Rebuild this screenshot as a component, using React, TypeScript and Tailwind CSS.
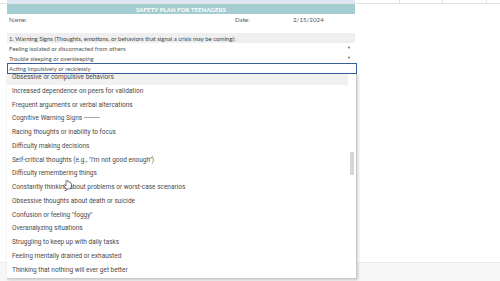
import React from 'react';

const items = [
    'Obsessive or compulsive behaviors',
    'Increased dependence on peers for validation',
    'Frequent arguments or verbal altercations',
    'Cognitive Warning Signs ---------',
    'Racing thoughts or inability to focus',
    'Difficulty making decisions',
    'Self-critical thoughts (e.g., "I\'m not good enough")',
    'Difficulty remembering things',
    'Constantly thinking about problems or worst-case scenarios',
    'Obsessive thoughts about death or suicide',
    'Confusion or feeling "foggy"',
    'Overanalyzing situations',
    'Struggling to keep up with daily tasks',
    'Feeling mentally drained or exhausted',
    'Thinking that nothing will ever get better',
];

const Caret = () => <span className="text-[4px] leading-none text-[#666]">▼</span>;

const App: React.FC = () => {
    return (
        <div className="relative w-[500px] h-[281px] overflow-hidden bg-white flex flex-col text-[#333]" style={{ fontFamily: 'Lato, "Liberation Sans", sans-serif' }}>
            {/* top partial row */}
            <div className="flex h-[4px] shrink-0 border-b border-[#e3e3e3]">
                <div className="w-[7px]" />
                <div className="w-[348px] bg-[#dde6f3]" />
                <div className="w-[45px] border-r border-[#e3e3e3]" />
                <div className="w-[43px] border-r border-[#e3e3e3]" />
                <div className="w-[44px] border-r border-[#e3e3e3]" />
            </div>

            {/* title */}
            <div className="flex h-[10px] shrink-0">
                <div className="w-[7px]" />
                <div className="w-[348px] bg-[#a3cdd0] flex items-center justify-center text-white font-bold text-[6px] tracking-[0.1px]">
                    SAFETY PLAN FOR TEENAGERS
                </div>
            </div>

            {/* name / date */}
            <div className="flex h-[12px] shrink-0 items-center text-[6.2px] text-[#555]">
                <div className="w-[9px]" />
                <div className="w-[226px]">Name:</div>
                <div className="w-[58px]">Date:</div>
                <div>2/15/2024</div>
            </div>

            <div className="h-[7px] shrink-0" />

            {/* section heading */}
            <div className="flex h-[10px] shrink-0">
                <div className="w-[7px]" />
                <div className="w-[348px] bg-[#efefef] flex items-center pl-[2px] text-[6px] text-[#444]">
                    1. Warning Signs (Thoughts, emotions, or behaviors that signal a crisis may be coming):
                </div>
            </div>

            {['Feeling isolated or disconnected from others', 'Trouble sleeping or oversleeping'].map(t => (
                <div key={t} className="flex h-[10px] shrink-0">
                    <div className="w-[7px]" />
                    <div className="w-[348px] flex items-center justify-between pl-[2px] pr-[4px] text-[6px] text-[#555]">
                        <span>{t}</span>
                        <Caret />
                    </div>
                </div>
            ))}

            {/* selected cell */}
            <div className="flex h-[11px] shrink-0">
                <div className="w-[7px]" />
                <div className="w-[350px] border border-[#3a5e9c] flex items-center pl-[1px] text-[6px] text-[#555]">
                    Acting impulsively or recklessly
                </div>
            </div>

            <div className="flex-1" />

            {/* sheet tab bar */}
            <div className="h-[19px] shrink-0 bg-[#f7f7f8] border-t border-[#ececec]" />

            {/* dropdown */}
            <div className="absolute left-[7px] top-[74px] w-[350px] h-[205px] bg-white border-r border-b border-[#c8c8c8] shadow-[1px_1px_3px_rgba(0,0,0,0.2)] overflow-hidden" style={{ fontFamily: 'Roboto, "Liberation Sans", sans-serif' }}>
                <div className="flex flex-col -mt-[3px]">
                    {items.map((t, i) => (
                        <div key={t} className={`h-[13.75px] shrink-0 flex items-center pl-[5px] text-[6.5px] text-[#4a4a4a] ${i === 0 ? 'bg-[#f1f1f1] mr-[8px]' : ''}`}>
                            {t}
                        </div>
                    ))}
                </div>
                {/* scrollbar thumb */}
                <div className="absolute left-[343px] top-[78px] w-[4px] h-[23px] bg-[#d6d6d6]" />
            </div>

            {/* cursor */}
            <svg className="absolute left-[63px] top-[180px]" width="9" height="11" viewBox="0 0 9 11">
                <path d="M3 1 v5 l-1 -1 q-1 -0.5 -1.5 0.3 l2.5 3.7 h4.5 l1 -3 v-2 q0 -0.8 -0.8 -0.8 v-0.4 q0 -0.8 -0.8 -0.8 q-0.6 0 -0.9 0.4 q0 -0.8 -0.8 -0.8 l-0.5 0.2 v-1.8 q0 -0.8 -0.7 -0.8 q-0.8 0 -0.8 0.8 z" fill="white" stroke="#222" strokeWidth="0.6" />
            </svg>
        </div>
    );
};

export default App;
